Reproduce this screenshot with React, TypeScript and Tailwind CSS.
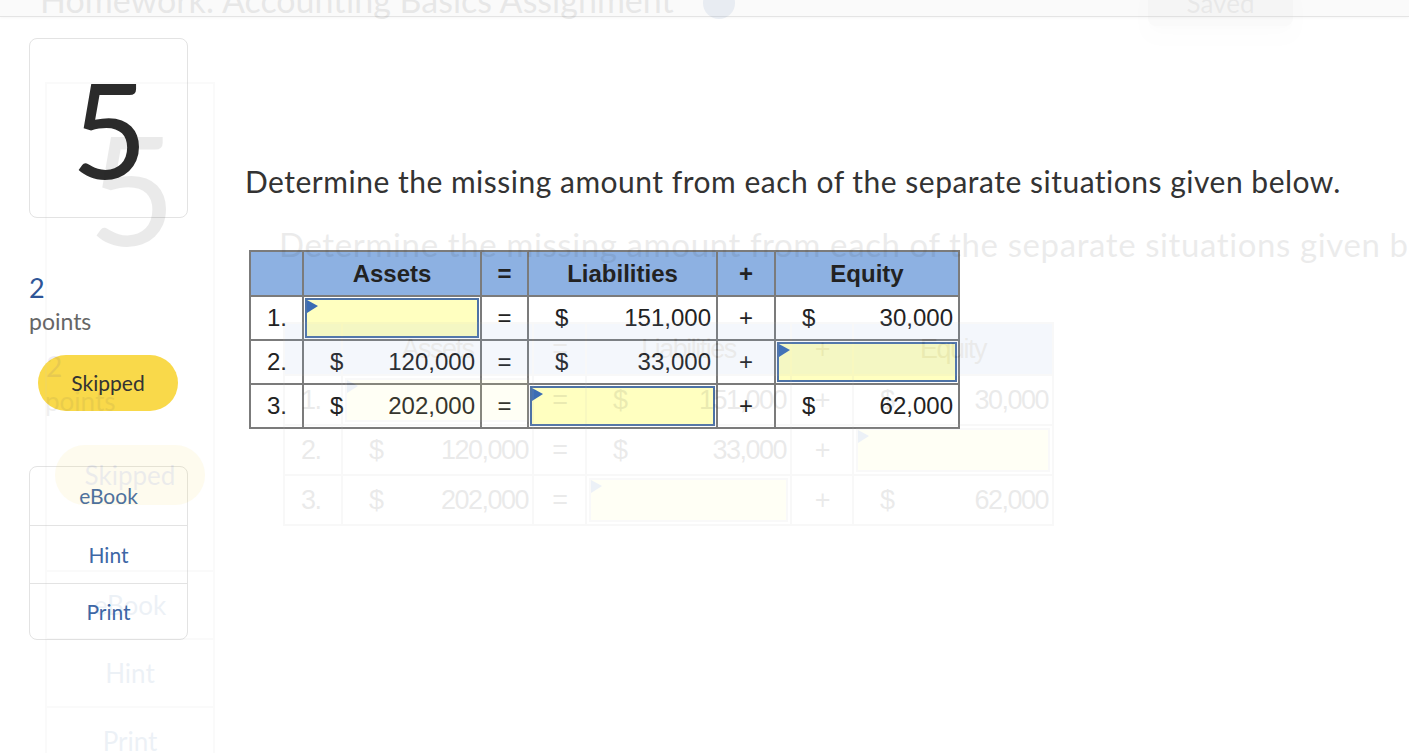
import React from 'react';

type Cell =
  | { kind: 'num'; text: string }
  | { kind: 'sign'; text: string }
  | { kind: 'money'; value: string }
  | { kind: 'input' };

const rows: Cell[][] = [
  [
    { kind: 'num', text: '1.' },
    { kind: 'input' },
    { kind: 'sign', text: '=' },
    { kind: 'money', value: '151,000' },
    { kind: 'sign', text: '+' },
    { kind: 'money', value: '30,000' },
  ],
  [
    { kind: 'num', text: '2.' },
    { kind: 'money', value: '120,000' },
    { kind: 'sign', text: '=' },
    { kind: 'money', value: '33,000' },
    { kind: 'sign', text: '+' },
    { kind: 'input' },
  ],
  [
    { kind: 'num', text: '3.' },
    { kind: 'money', value: '202,000' },
    { kind: 'sign', text: '=' },
    { kind: 'input' },
    { kind: 'sign', text: '+' },
    { kind: 'money', value: '62,000' },
  ],
];

const Flag = () => (
  <svg width="11" height="14" viewBox="0 0 11 14" className="absolute left-0 top-0">
    <polygon points="0,0 11,6 0,13" fill="#3b6cb4" />
  </svg>
);

const MainCell: React.FC<{ cell: Cell }> = ({ cell }) => {
  if (cell.kind === 'input') {
    return (
      <td className="border-2 border-[#7b7b7b] p-0">
        <div className="relative mx-[1px] h-[40px] border-2 border-[#4d72a6] bg-[#ffffc0]">
          <Flag />
        </div>
      </td>
    );
  }
  if (cell.kind === 'money') {
    return (
      <td className="border-2 border-[#7b7b7b] p-0">
        <div className="flex justify-between pl-[26px] pr-[5px]">
          <span>$</span>
          <span>{cell.value}</span>
        </div>
      </td>
    );
  }
  if (cell.kind === 'num') {
    return <td className="border-2 border-[#7b7b7b] pl-[16px]">{cell.text}</td>;
  }
  return <td className="border-2 border-[#7b7b7b] text-center">{cell.text}</td>;
};

const MainTable = () => (
  <table className="table-fixed border-collapse border-2 border-[#7b7b7b] font-['Liberation_Sans',Arial,sans-serif] text-[24px] text-[#222]">
    <colgroup>
      <col className="w-[53px]" />
      <col className="w-[178px]" />
      <col className="w-[47px]" />
      <col className="w-[189px]" />
      <col className="w-[58px]" />
      <col className="w-[184px]" />
    </colgroup>
    <thead>
      <tr className="h-[45px] bg-[#8db1e2] font-bold">
        <th className="border-2 border-[#7b7b7b]"></th>
        <th className="border-2 border-[#7b7b7b]">Assets</th>
        <th className="border-2 border-[#7b7b7b]">=</th>
        <th className="border-2 border-[#7b7b7b]">Liabilities</th>
        <th className="border-2 border-[#7b7b7b]">+</th>
        <th className="border-2 border-[#7b7b7b]">Equity</th>
      </tr>
    </thead>
    <tbody>
      {rows.map((r, i) => (
        <tr key={i} className="h-[44px] bg-white">
          {r.map((c, j) => (
            <MainCell key={j} cell={c} />
          ))}
        </tr>
      ))}
    </tbody>
  </table>
);

const GhostCell: React.FC<{ cell: Cell }> = ({ cell }) => {
  if (cell.kind === 'input') {
    return (
      <td className="border-2 border-[#bbbbbb] p-0">
        <div className="relative mx-[2px] h-[44px] border-2 border-[#c9c9c9] bg-[#ffff99]">
          <Flag />
        </div>
      </td>
    );
  }
  if (cell.kind === 'money') {
    return (
      <td className="border-2 border-[#bbbbbb] p-0">
        <div className="flex justify-between pl-[26px] pr-[4px]">
          <span>$</span>
          <span>{cell.value}</span>
        </div>
      </td>
    );
  }
  if (cell.kind === 'num') {
    return <td className="border-2 border-[#bbbbbb] pl-[16px]">{cell.text}</td>;
  }
  return <td className="border-2 border-[#bbbbbb] text-center">{cell.text}</td>;
};

// faint double-exposure of the page that sits over everything
const Ghost = () => (
  <div className="pointer-events-none absolute inset-0 opacity-[0.09]">
    <div className="absolute left-[40px] top-[-20px] font-['Lato',sans-serif] text-[34px] leading-[40px] text-[#333]">
      Homework: Accounting Basics Assignment
    </div>
    <div className="absolute left-[703px] top-[-13px] h-[32px] w-[32px] rounded-full bg-[#3d6aa8]" />
    <div className="absolute left-[1148px] top-[-14px] flex h-[40px] w-[145px] items-end justify-center rounded-lg bg-[#cccccc] pb-[10px] font-['Lato',sans-serif] text-[26px] leading-[26px] text-[#444] shadow-lg">
      Saved
    </div>

    <div className="absolute left-[45px] top-[82px] h-[671px] w-[170px] border-2 border-b-0 border-[#cccccc]" />
    <div className="absolute left-[88px] top-[112px] font-['Lato',sans-serif] text-[152px] leading-[150px] text-[#222]">
      5
    </div>

    <div className="absolute left-[46px] top-[350px] font-['Lato',sans-serif] text-[28px] leading-[32px] text-[#3d3399]">2</div>
    <div className="absolute left-[45px] top-[386px] font-['Lato',sans-serif] text-[26px] leading-[30px] text-[#555]">points</div>
    <div className="absolute left-[55px] top-[445px] flex h-[60px] w-[150px] items-center justify-center rounded-full bg-[#f9d94a] font-['Lato',sans-serif] text-[26px] text-[#333]">
      Skipped
    </div>
    <div className="absolute left-[45px] top-[570px] flex w-[170px] flex-col border-2 border-[#cccccc] font-['Lato',sans-serif] text-[26px] text-[#3d6aa8]">
      <div className="flex h-[66px] items-center justify-center">eBook</div>
      <div className="flex h-[68px] items-center justify-center border-t-2 border-[#cccccc]">Hint</div>
      <div className="flex h-[68px] items-center justify-center border-t-2 border-[#cccccc]">Print</div>
    </div>

    <div className="absolute left-[279px] top-[222px] whitespace-nowrap font-['Lato',sans-serif] text-[33px] leading-[44px] tracking-[0.6px] text-[#333]">
      Determine the missing amount from each of the separate situations given below.
    </div>

    <div className="absolute left-[283px] top-[322px]">
      <table className="table-fixed border-collapse font-['Liberation_Sans',Arial,sans-serif] text-[27px] tracking-[-1.5px] text-[#222]">
        <colgroup>
          <col className="w-[58px]" />
          <col className="w-[191px]" />
          <col className="w-[53px]" />
          <col className="w-[205px]" />
          <col className="w-[62px]" />
          <col className="w-[200px]" />
        </colgroup>
        <thead>
          <tr className="h-[52px] bg-[#8db1e2]">
            <th className="border-2 border-[#bbbbbb]"></th>
            <th className="border-2 border-[#bbbbbb] font-normal">Assets</th>
            <th className="border-2 border-[#bbbbbb] font-normal">=</th>
            <th className="border-2 border-[#bbbbbb] font-normal">Liabilities</th>
            <th className="border-2 border-[#bbbbbb] font-normal">+</th>
            <th className="border-2 border-[#bbbbbb] font-normal">Equity</th>
          </tr>
        </thead>
        <tbody>
          {rows.map((r, i) => (
            <tr key={i} className="h-[50px]">
              {r.map((c, j) => (
                <GhostCell key={j} cell={c} />
              ))}
            </tr>
          ))}
        </tbody>
      </table>
    </div>
  </div>
);

const App: React.FC = () => {
  return (
    <div className="relative h-[753px] w-[1409px] overflow-hidden bg-white font-['Lato',sans-serif]">
      <div className="h-[17px] border-b border-[#e4e4e4] bg-[#fafafa] shadow-[0_1px_3px_rgba(0,0,0,0.04)]" />

      <div className="flex pl-[29px] pt-[21px]">
        {/* left rail */}
        <div className="flex w-[159px] flex-col">
          <div className="flex h-[180px] items-center justify-center rounded-lg border border-[#e3e3e3] pl-[2px] text-[132px] leading-none text-[#2b2b2b]">
            5
          </div>
          <div className="mt-[55px] text-[27px] leading-[30px] text-[#2e5597]">2</div>
          <div className="mt-[4px] text-[23px] leading-[28px] text-[#666]">points</div>
          <div className="ml-[9px] mt-[20px] flex h-[56px] w-[140px] items-center justify-center rounded-full bg-[#f9d94a] text-[21px] text-[#333]">
            Skipped
          </div>
          <div className="mt-[55px] flex flex-col rounded-lg border border-[#e3e3e3] text-[21px] text-[#3d67a6]">
            <div className="flex h-[58px] items-center justify-center">eBook</div>
            <div className="flex h-[58px] items-center justify-center border-t border-[#e3e3e3]">Hint</div>
            <div className="flex h-[56px] items-center justify-center border-t border-[#e3e3e3]">Print</div>
          </div>
        </div>

        {/* question body */}
        <div className="ml-[57px] pt-[125px]">
          <p className="whitespace-nowrap text-[30px] leading-[36px] tracking-[0.5px] text-[#333]">
            Determine the missing amount from each of the separate situations given below.
          </p>
          <div className="ml-[4px] mt-[51px]">
            <MainTable />
          </div>
        </div>
      </div>

      <Ghost />
    </div>
  );
};

export default App;
